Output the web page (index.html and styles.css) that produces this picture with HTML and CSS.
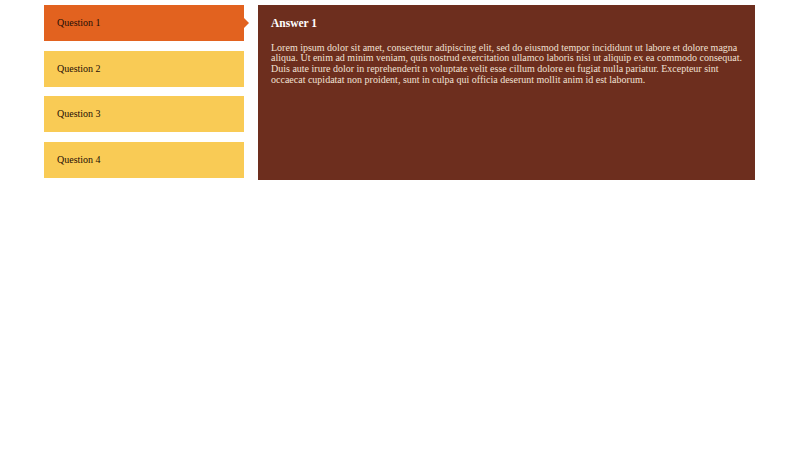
FILE: index.html
```html
<!DOCTYPE html>
<html>
<head>
<meta charset="utf-8">
<link rel="stylesheet" href="styles.css">
</head>
<body>
<div class="faq">
  <ul class="questions">
    <li class="q active">Question 1</li>
    <li class="q">Question 2</li>
    <li class="q">Question 3</li>
    <li class="q">Question 4</li>
  </ul>
  <div class="answer">
    <h2 class="a-title">Answer 1</h2>
    <p class="a-text">Lorem ipsum dolor sit amet, consectetur adipiscing elit, sed do eiusmod tempor incididunt ut labore et dolore magna aliqua. Ut enim ad minim veniam, quis nostrud exercitation ullamco laboris nisi ut aliquip ex ea commodo consequat. Duis aute irure dolor in reprehenderit n voluptate velit esse cillum dolore eu fugiat nulla pariatur. Excepteur sint occaecat cupidatat non proident, sunt in culpa qui officia deserunt mollit anim id est laborum.</p>
  </div>
</div>
</body>
</html>
```
FILE: styles.css
```css
html, body {
  margin: 0;
  padding: 0;
  background: #ffffff;
}
body {
  font-family: "Liberation Serif", "Times New Roman", serif;
}
.faq {
  display: flex;
  align-items: flex-start;
  gap: 14px;
  padding: 5px 0 0 44px;
}
.questions {
  list-style: none;
  margin: 0;
  padding: 0;
  width: 200px;
  display: flex;
  flex-direction: column;
  gap: 9.7px;
}
.q {
  position: relative;
  height: 36px;
  line-height: 36px;
  padding-left: 13px;
  font-size: 10px;
  color: #1f0e06;
  background: #f9cb55;
}
.q.active {
  background: #e2621f;
}
.q.active::after {
  content: "";
  position: absolute;
  right: -5px;
  top: 13px;
  border-top: 5px solid transparent;
  border-bottom: 5px solid transparent;
  border-left: 5px solid #e2621f;
}
.answer {
  width: 497px;
  height: 175px;
  box-sizing: border-box;
  padding: 12.3px 13px;
  background: #6d2e1e;
  color: #f1e0d4;
}
.a-title {
  margin: 0 0 12.3px;
  font-size: 11.5px;
  font-weight: bold;
  color: #ffffff;
  line-height: 13px;
}
.a-text {
  margin: 0;
  font-size: 10px;
  line-height: 10.7px;
}
```
